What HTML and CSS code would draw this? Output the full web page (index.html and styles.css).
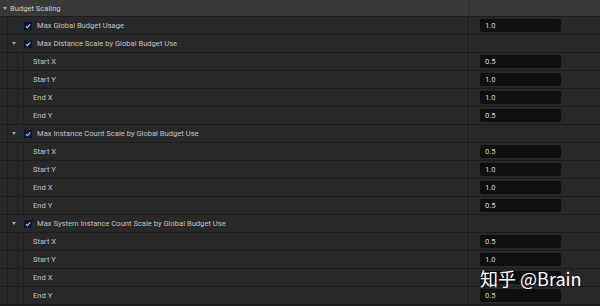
FILE: index.html
```html
<!DOCTYPE html>
<html lang="en">
<head>
    <meta charset="UTF-8">
    <title>Budget Scaling</title>
    <link rel="stylesheet" href="styles.css">
</head>
<body>
    <div class="panel">
        <div class="category">
            <div class="name"><span class="arrow"></span>Budget Scaling</div>
            <div class="value"></div>
        </div>

        <div class="row">
            <div class="name"><span class="gutter"></span><span class="slot"></span><span class="check"><svg viewBox="0 0 10 10"><path d="M2.3 5.2 L4.2 7 L7.8 3"/></svg></span>Max Global Budget Usage</div>
            <div class="value"><span class="field">1.0</span></div>
        </div>

        <div class="row">
            <div class="name"><span class="gutter"></span><span class="slot"><span class="arrow"></span></span><span class="check"><svg viewBox="0 0 10 10"><path d="M2.3 5.2 L4.2 7 L7.8 3"/></svg></span>Max Distance Scale by Global Budget Use</div>
            <div class="value"></div>
        </div>
        <div class="row child">
            <div class="name"><span class="gutter"></span><span class="indent"></span><span class="indent-b"></span>Start X</div>
            <div class="value"><span class="field">0.5</span></div>
        </div>
        <div class="row child">
            <div class="name"><span class="gutter"></span><span class="indent"></span><span class="indent-b"></span>Start Y</div>
            <div class="value"><span class="field">1.0</span></div>
        </div>
        <div class="row child">
            <div class="name"><span class="gutter"></span><span class="indent"></span><span class="indent-b"></span>End X</div>
            <div class="value"><span class="field">1.0</span></div>
        </div>
        <div class="row child">
            <div class="name"><span class="gutter"></span><span class="indent"></span><span class="indent-b"></span>End Y</div>
            <div class="value"><span class="field">0.5</span></div>
        </div>

        <div class="row">
            <div class="name"><span class="gutter"></span><span class="slot"><span class="arrow"></span></span><span class="check"><svg viewBox="0 0 10 10"><path d="M2.3 5.2 L4.2 7 L7.8 3"/></svg></span>Max Instance Count Scale by Global Budget Use</div>
            <div class="value"></div>
        </div>
        <div class="row child">
            <div class="name"><span class="gutter"></span><span class="indent"></span><span class="indent-b"></span>Start X</div>
            <div class="value"><span class="field">0.5</span></div>
        </div>
        <div class="row child">
            <div class="name"><span class="gutter"></span><span class="indent"></span><span class="indent-b"></span>Start Y</div>
            <div class="value"><span class="field">1.0</span></div>
        </div>
        <div class="row child">
            <div class="name"><span class="gutter"></span><span class="indent"></span><span class="indent-b"></span>End X</div>
            <div class="value"><span class="field">1.0</span></div>
        </div>
        <div class="row child">
            <div class="name"><span class="gutter"></span><span class="indent"></span><span class="indent-b"></span>End Y</div>
            <div class="value"><span class="field">0.5</span></div>
        </div>

        <div class="row">
            <div class="name"><span class="gutter"></span><span class="slot"><span class="arrow"></span></span><span class="check"><svg viewBox="0 0 10 10"><path d="M2.3 5.2 L4.2 7 L7.8 3"/></svg></span>Max System Instance Count Scale by Global Budget Use</div>
            <div class="value"></div>
        </div>
        <div class="row child">
            <div class="name"><span class="gutter"></span><span class="indent"></span><span class="indent-b"></span>Start X</div>
            <div class="value"><span class="field">0.5</span></div>
        </div>
        <div class="row child">
            <div class="name"><span class="gutter"></span><span class="indent"></span><span class="indent-b"></span>Start Y</div>
            <div class="value"><span class="field">1.0</span></div>
        </div>
        <div class="row child">
            <div class="name"><span class="gutter"></span><span class="indent"></span><span class="indent-b"></span>End X</div>
            <div class="value"><span class="field"></span></div>
        </div>
        <div class="row child">
            <div class="name"><span class="gutter"></span><span class="indent"></span><span class="indent-b"></span>End Y</div>
            <div class="value"><span class="field">0.5</span></div>
        </div>

        <div class="watermark">知乎 @Brain</div>
    </div>
</body>
</html>
```

FILE: styles.css
```css
body {
    margin: 0;
    background: #242424;
    font-family: Roboto, 'Noto Sans', sans-serif;
    font-size: 7.6px;
    color: #c4c4c4;
}
.panel {
    position: relative;
    width: 600px;
    height: 306px;
    overflow: hidden;
    background: #262626;
}
.category,
.row {
    display: grid;
    grid-template-columns: 469px 1fr;
    height: 18px;
    box-sizing: border-box;
    border-bottom: 1px solid #1c1c1c;
    background: #282828;
}
.category {
    height: 17px;
    background: #393939;
    border-bottom: 1px solid #1e1e1e;
}
.name {
    display: flex;
    align-items: center;
    height: 100%;
    border-right: 1px solid #1e1e1e;
    white-space: nowrap;
}
.value {
    display: flex;
    align-items: center;
    height: 100%;
    padding-left: 10px;
    border-left: 1px solid #303030;
}
.category .name {
    padding-left: 3px;
    color: #cfcfcf;
}
.category .name,
.category .value {
    border-color: #333;
}
.arrow {
    width: 0;
    height: 0;
    border-left: 2.5px solid transparent;
    border-right: 2.5px solid transparent;
    border-top: 3.5px solid #a8a8a8;
    margin-right: 3px;
}
.gutter {
    width: 7px;
    height: 100%;
    border-right: 1px solid #1f1f1f;
    flex-shrink: 0;
}
.slot {
    display: flex;
    align-items: center;
    width: 14px;
    padding-left: 4px;
    box-sizing: border-box;
    height: 100%;
}
.check {
    display: flex;
    width: 10px;
    height: 10px;
    margin: 0 4px 0 1px;
    border-radius: 1.5px;
    background: #0d1626;
    border: 1px solid #1b2a45;
    box-sizing: border-box;
}
.check svg {
    width: 100%;
    height: 100%;
    fill: none;
    stroke: #9ec2ff;
    stroke-width: 1.5;
}
.indent {
    width: 9px;
    height: 100%;
    border-right: 1px solid #1f1f1f;
    flex-shrink: 0;
}
.indent-b {
    width: 5px;
    height: 100%;
    border-right: 1px solid #1f1f1f;
    margin-right: 9px;
    flex-shrink: 0;
}
.field {
    display: flex;
    align-items: center;
    width: 81px;
    height: 13px;
    padding-left: 5px;
    box-sizing: border-box;
    background: #0f0f0f;
    border-radius: 2px;
    color: #d8d8d8;
}
.watermark {
    position: absolute;
    left: 480px;
    top: 267px;
    font-family: 'Noto Sans CJK SC', 'Noto Sans', sans-serif;
    font-size: 18px;
    line-height: 22px;
    color: #fff;
    text-shadow: 0 0 2px rgba(0, 0, 0, 0.5);
}
```
